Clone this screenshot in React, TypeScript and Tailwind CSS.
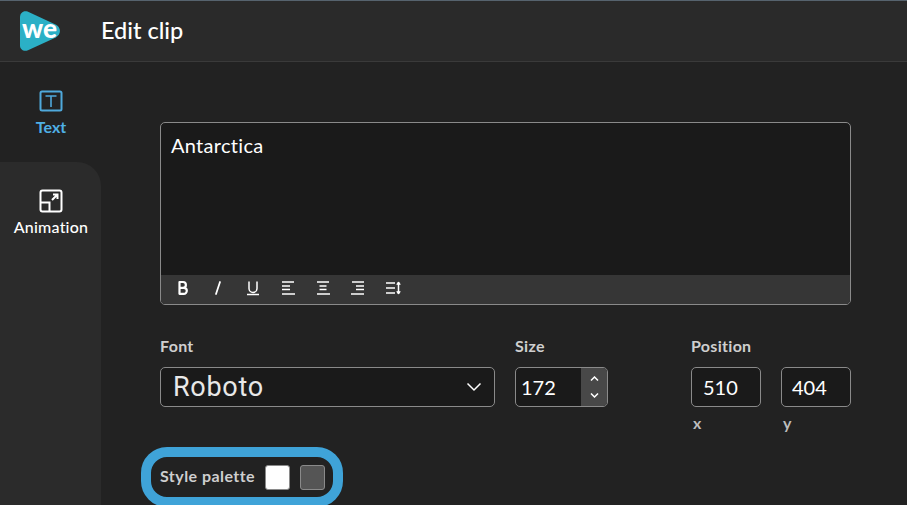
import React from "react";

const ToolIcon = ({ children }: { children: React.ReactNode }) => (
  <svg width="16" height="16" viewBox="0 0 16 16" fill="none" stroke="#fff" strokeWidth="1.5" strokeLinecap="round" strokeLinejoin="round">
    {children}
  </svg>
);

const tools = [
  <path key="b" strokeWidth="2.200" d="M4.500 2h3.500a2.800 2.800 0 0 1 0 5.800h-3.500zM4.500 7.800h4.300a3 3 0 0 1 0 6H4.500z" />,
  <path key="i" strokeWidth="1.800" d="M10 2 6 14" />,
  <path key="u" d="M4 1.500v7a4 4 0 0 0 8 0v-7M2 14.500h12" strokeLinecap="butt" />,
  <path key="l" d="M2 2h12M2 6h8M2 9.500h8M2 14h13" strokeLinecap="butt" />,
  <path key="c" d="M2 2h12M4.500 6h7M4.500 9.500h7M2 14h13" strokeLinecap="butt" />,
  <path key="r" d="M2 2h12M6 6h8M6 9.500h8M1 14h13" strokeLinecap="butt" />,
  <g key="h">
    <path d="M1 3h9M1 8h9M1 13h9" strokeLinecap="butt" />
    <path d="M13.500 2.500v11" />
    <path d="m12 4 1.500-2L15 4zM12 12l1.500 2 1.500-2z" fill="#fff" strokeWidth="1" />
  </g>,
];

const Field = ({ value, className }: { value: string; className: string }) => (
  <div className={`h-10 rounded-[5px] border border-[#8a8a8a] bg-[#1a1a1a] text-[20px] text-white flex items-center ${className}`}>{value}</div>
);

export default function App() {
  return (
    <div className="w-[907px] h-[505px] overflow-hidden flex flex-col bg-[#222222] text-white font-['Lato','Liberation_Sans',sans-serif]">
      <header className="h-[62px] shrink-0 flex items-center bg-[#2a2a2a] border-t border-t-[#56636e] border-b border-b-[#3a3a3a] pl-[20px]">
        <svg width="40" height="40" viewBox="0 0 40 40" className="mt-[-1px]">
          <path d="M0 6C0 1.800 3.500 -.9 7.500.5L35.500 13.500c5.800 2.800 6 10 .3 12.900L8 39.300C3.800 41 0 38.500 0 34.500z" fill="#2bb0c6" />
          <text x="2" y="27" fontSize="27" fontWeight="900" fill="#fff" fontFamily="Lato, sans-serif" textLength="35" lengthAdjust="spacingAndGlyphs">we</text>
        </svg>
        <h1 className="ml-[41px] text-[23.500px] font-medium leading-none">Edit clip</h1>
      </header>
      <div className="flex flex-1 min-h-0">
        <nav className="w-[101px] shrink-0 flex flex-col">
          <div className="h-[100px] flex flex-col items-center pt-[27px] pl-[1px] text-[#4fb0e6] bg-[#222222]">
            <svg width="24" height="24" viewBox="0 0 24 24" fill="none" stroke="#4fa9dc" strokeWidth="2">
              <rect x="1.500" y="2.500" width="21" height="19" rx="1.500" />
              <path d="M6.500 7h11M12 7v11" strokeWidth="1.600" />
            </svg>
            <span className="text-[16px] font-bold leading-none mt-[6px]">Text</span>
          </div>
          <div className="flex-1 bg-[#2b2b2b] rounded-tr-[24px] flex flex-col items-center pt-[27px] pl-[1px]">
            <svg width="24" height="24" viewBox="0 0 24 24" fill="none" stroke="#fff" strokeWidth="2">
              <rect x="1.500" y="1.500" width="21" height="21" rx="2" />
              <path d="M1.500 13.500h9v9" />
              <path d="M13 11l5.500-5.500M14 5.500h4.500V10" />
            </svg>
            <span className="text-[16px] font-medium leading-none mt-[6px] tracking-[0.2px]">Animation</span>
          </div>
        </nav>
        <main className="flex-1 pl-[59px] pr-[56px] pt-[60px] relative">
          <div className="h-[183px] rounded-[5px] border border-[#8a8a8a] bg-[#1a1a1a] flex flex-col overflow-hidden">
            <div className="flex-1 px-[10px] pt-[9px] text-[20px] tracking-[0.3px] leading-[26px]">Antarctica</div>
            <div className="h-[29px] bg-[#363636] flex items-center pl-[14px] pb-[3px] gap-[19px]">
              {tools.map((t, i) => (
                <ToolIcon key={i}>{t}</ToolIcon>
              ))}
            </div>
          </div>
          <div className="flex mt-[32px]">
            <div className="w-[335px]">
              <div className="text-[16px] font-bold text-[#cfcfcf] leading-[18px] mb-[12px] tracking-[0.3px]">Font</div>
              <div className="h-10 rounded-[5px] border border-[#8a8a8a] bg-[#1a1a1a] flex items-center justify-between pl-[12px] pr-[12px]">
                <span className="font-['Roboto',sans-serif] text-[27px] tracking-[0.7px] text-[#e8e8e8] pt-[1px]">Roboto</span>
                <svg width="16" height="10" viewBox="0 0 16 10" fill="none" stroke="#fff" strokeWidth="1.500"><path d="m1.500 1.500 6.500 6.500 6.500-6.500" /></svg>
              </div>
            </div>
            <div className="w-[93px] ml-[20px]">
              <div className="text-[16px] font-bold text-[#cfcfcf] leading-[18px] mb-[12px] tracking-[0.3px]">Size</div>
              <div className="h-10 rounded-[5px] border border-[#8a8a8a] bg-[#1a1a1a] flex overflow-hidden">
                <div className="flex-1 pl-[5px] text-[20px] flex items-center">172</div>
                <div className="w-[26px] bg-[#484848] flex flex-col items-center justify-center gap-[12px]">
                  <svg width="9" height="5" viewBox="0 0 9 5" fill="none" stroke="#fff" strokeWidth="1.500"><path d="m1 4.500 3.500-3.500L8 4.500" /></svg>
                  <svg width="9" height="5" viewBox="0 0 9 5" fill="none" stroke="#fff" strokeWidth="1.500"><path d="m1 .5 3.500 3.500L8 .5" /></svg>
                </div>
              </div>
            </div>
            <div className="ml-[83px]">
              <div className="text-[16px] font-bold text-[#cfcfcf] leading-[18px] mb-[12px] tracking-[0.3px]">Position</div>
              <div className="flex gap-[20px]">
                <div className="w-[70px]">
                  <Field value="510" className="pl-[11px]" />
                  <div className="text-[16px] font-bold text-[#bdbdbd] leading-[18px] mt-[7px] pl-[2px]">x</div>
                </div>
                <div className="w-[70px]">
                  <Field value="404" className="pl-[10px]" />
                  <div className="text-[16px] font-bold text-[#bdbdbd] leading-[18px] mt-[7px] pl-[2px]">y</div>
                </div>
              </div>
            </div>
          </div>
          <div className="absolute left-[40px] top-[385px] w-[202px] h-[60px] rounded-[26px] border-[10px] border-[#3fa3d8] flex items-center pl-[9px]">
            <span className="text-[16px] font-bold text-[#cfcfcf] leading-none mr-[10px] mb-[2px] whitespace-nowrap tracking-[0.45px]">Style palette</span>
            <span className="w-[25px] h-[25px] rounded-[3px] bg-white border border-[#8a8a8a]" />
            <span className="w-[25px] h-[25px] rounded-[3px] bg-[#555555] border border-[#8a8a8a] ml-[10px]" />
          </div>
        </main>
      </div>
    </div>
  );
}
